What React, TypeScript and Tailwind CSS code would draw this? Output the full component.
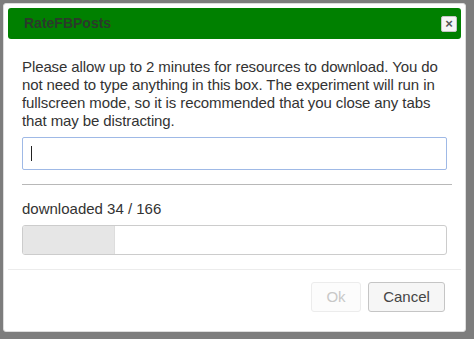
export default function App() {
  return (
    <div
      className="w-[474px] h-[339px] bg-[#7d7d7d] pt-[3px] pl-[3px]"
      style={{ fontFamily: '"Liberation Sans", Arial, sans-serif' }}
    >
      <div className="w-[463px] h-[329px] bg-white border border-[#dddddd] rounded-[3px] p-[4px] flex flex-col">
        <div className="h-[31px] bg-[#008000] rounded-[3px] flex items-center justify-between pl-[16px] pr-[4px] shrink-0">
          <span className="text-[14px] font-bold text-[#2b3a2b]">RateFBPosts</span>
          <button className="w-[16px] h-[16px] bg-[#f6f6f6] border border-[#c5c5c5] rounded-[2px] flex items-center justify-center text-[#555] text-[13px] font-bold leading-none">
            ×
          </button>
        </div>
        <div className="px-[14px] pt-[19px] text-[#333] flex flex-col">
          <p className="text-[15px] leading-[18px] tracking-[-0.1px]">
            Please allow up to 2 minutes for resources to download. You do not need to type anything in this box. The experiment will run in fullscreen mode, so it is recommended that you close any tabs that may be distracting.
          </p>
          <div className="mt-[7px] w-[425px] h-[33px] border border-[#9fb9e6] rounded-[2px] flex items-center pl-[8px]">
            <div className="w-[1px] h-[15px] bg-[#222]" />
          </div>
          <div className="mt-[14px] w-[430px] h-[1px] bg-[#b8b8b8]" />
          <div className="mt-[15px] text-[15px] leading-[18px]">downloaded 34 / 166</div>
          <div className="mt-[7px] w-[425px] h-[30px] border border-[#cccccc] rounded-[3px] overflow-hidden">
            <div className="h-full bg-[#e6e6e6] border-r border-[#dddddd]" style={{ width: `${(34 / 166) * 100 + 1.2}%` }} />
          </div>
        </div>
        <div className="mt-[14px] h-[1px] bg-[#ececec]" />
        <div className="flex justify-end gap-[7px] pr-[16px] pt-[12px]">
          <button
            disabled
            className="w-[50px] h-[30px] border border-[#ececec] rounded-[3px] bg-[#fcfcfc] text-[#c8c8c8] text-[15px]"
          >
            Ok
          </button>
          <button className="w-[77px] h-[30px] border border-[#c5c5c5] rounded-[3px] bg-[#f6f6f6] text-[#454545] text-[15px]">
            Cancel
          </button>
        </div>
      </div>
    </div>
  )
}
